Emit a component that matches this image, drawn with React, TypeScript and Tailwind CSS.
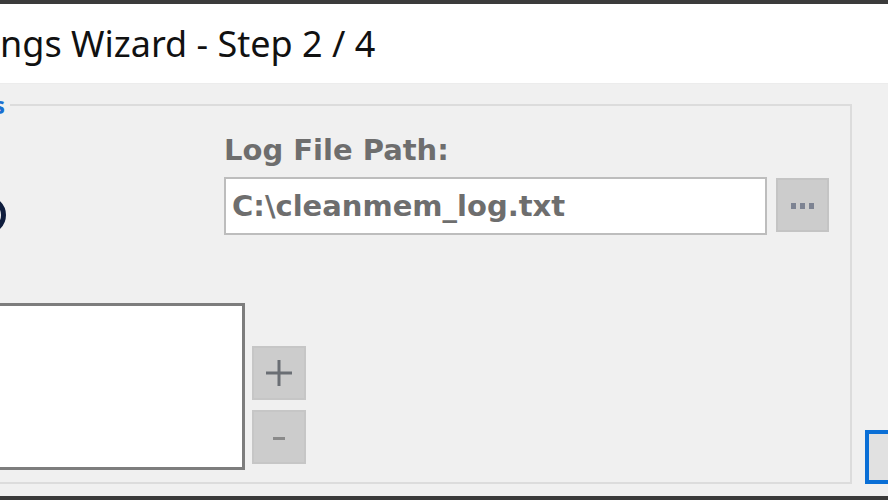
import React from 'react';

const FONT = { fontFamily: '"DejaVu Sans", "Open Sans", sans-serif' };

const ToolButton = ({ children }: { children: React.ReactNode }) => (
  <div className="w-[54px] h-[54px] bg-[#cccccc] border-2 border-[#c6c6c6] flex items-center justify-center">
    {children}
  </div>
);

export default function App() {
  return (
    <div className="w-[888px] h-[500px] overflow-hidden flex flex-col bg-[#f0f0f0]" style={FONT}>
      {/* Window frame top edge */}
      <div className="h-[4px] bg-[#3b3b3b]" />

      {/* Title bar */}
      <div className="h-[80px] bg-white flex items-center border-b border-[#ececec]">
        <div className="flex whitespace-nowrap text-[36px] text-[#111] leading-none pt-[1px]" style={{ fontFamily: '"Noto Sans", sans-serif' }}>
          <span className="w-0 flex justify-end">Setti</span>
          <span>ngs Wizard - Step 2 / 4</span>
        </div>
      </div>

      {/* Body */}
      <div className="flex-1 flex pt-[10px] pb-[12px]">
        {/* Group box */}
        <div className="ml-[-60px] w-[912px] flex flex-col shrink-0">
          <div className="h-[22px] flex items-start">
            <div className="w-[65px] h-[22px] flex items-center justify-end whitespace-nowrap text-[24px] font-bold text-[#1a6fd0] leading-none" style={{ fontFamily: '"Open Sans", sans-serif' }}>
              Logging Options
            </div>
            <div className="ml-[5px] mt-[10px] flex-1 self-stretch border-t-2 border-r-2 border-[#dcdcdc]" />
          </div>

          <div className="flex-1 border-r-2 border-b-2 border-[#dcdcdc] pl-[60px] flex flex-col">
            {/* Log path row */}
            <div className="flex mt-[17px]">
              <div className="w-[224px] shrink-0">
                <div className="mt-[63px] ml-[-34px] w-[40px] h-[38px] rounded-full border-[5px] border-[#0f1d3d]" />
              </div>
              <div className="flex flex-col">
                <div className="text-[29px] leading-[34px] font-bold text-[#6e6e6e]">Log File Path:</div>
                <div className="mt-[10px] flex items-start gap-[9px]">
                  <div className="w-[543px] h-[58px] bg-white border-2 border-[#bdbdbd] flex items-center px-[6px]">
                    <span className="text-[29px] font-bold text-[#6e6e6e] leading-none">C:\cleanmem_log.txt</span>
                  </div>
                  <div className="mt-[1px] w-[53px] h-[54px] bg-[#cccccc] border-2 border-[#c4c4c4] flex items-center justify-center gap-[4px] pt-[2px]">
                    <div className="w-[5px] h-[6px] bg-[#7d8392]" />
                    <div className="w-[5px] h-[6px] bg-[#7d8392]" />
                    <div className="w-[5px] h-[6px] bg-[#7d8392]" />
                  </div>
                </div>
              </div>
            </div>

            {/* Exclusion list row */}
            <div className="flex items-end mt-[68px]">
              <div className="ml-[-20px] w-[265px] h-[167px] bg-white border-[3px] border-[#7d7d7d]" />
              <div className="ml-[7px] mb-[6px] flex flex-col gap-[10px]">
                <ToolButton>
                  <svg width="28" height="28" viewBox="0 0 28 28">
                    <path d="M1 14H27M14 1V27" stroke="#6a6e74" strokeWidth="3" />
                  </svg>
                </ToolButton>
                <ToolButton>
                  <div className="w-[12px] h-[3px] bg-[#8a8a8a] mt-[2px]" />
                </ToolButton>
              </div>
            </div>
          </div>
        </div>

        {/* Dialog buttons column */}
        <div className="flex-1 flex flex-col justify-end pl-[13px]">
          <div className="w-[80px] h-[54px] border-[4px] border-[#0a6fd6] bg-[#e1e1e1]" />
        </div>
      </div>

      {/* Window frame bottom edge */}
      <div className="h-[4px] bg-[#3a3a3a]" />
    </div>
  );
}
